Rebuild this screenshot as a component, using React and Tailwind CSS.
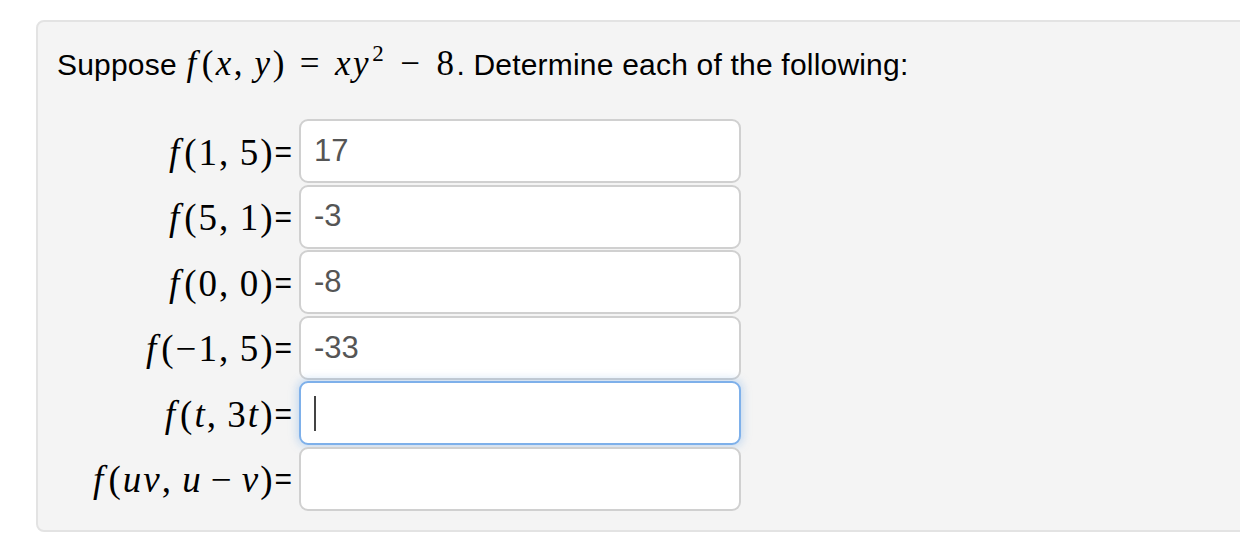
import React from "react";

const serif = { fontFamily: '"Liberation Serif", "Times New Roman", serif' };

function V({ children, className = "" }) {
  return <i className={`italic ${className}`}>{children}</i>;
}

function Label({ children }) {
  return (
    <div className="flex items-center justify-end h-[64px] pr-[7px] text-[30px] text-black">
      <span style={serif} className="text-[37px] leading-none tracking-[2px] pt-[2px]">
        {children}
      </span>
      <span>=</span>
    </div>
  );
}

function Field({ value, focused }) {
  return (
    <div
      className={`h-[64px] w-[442px] rounded-[9px] bg-white flex items-center pl-[13px] text-[31px] text-[#555] ${
        focused
          ? "border-2 border-[#7eb0ea] shadow-[0_0_8px_2px_rgba(110,165,230,0.35)]"
          : "border-2 border-[#d0d0d0]"
      }`}
    >
      {value}
      {focused && <span className="block w-[2px] h-[35px] bg-[#444]" />}
    </div>
  );
}

const rows = [
  { label: <><V className="mr-[3px]">f</V>(1,&#8201;5)</>, value: "17" },
  { label: <><V className="mr-[3px]">f</V>(5,&#8201;1)</>, value: "-3" },
  { label: <><V className="mr-[3px]">f</V>(0,&#8201;0)</>, value: "-8" },
  { label: <><V className="mr-[3px]">f</V>(−1,&#8201;5)</>, value: "-33" },
  { label: <><V className="mr-[3px]">f</V>(<V>t</V>,&#8201;3<V>t</V>)</>, value: "", focused: true },
  {
    label: (
      <>
        <V className="mr-[3px]">f</V>(<V>uv</V>,&#8201;<V>u</V>
        <span className="mx-[8px]">−</span>
        <V>v</V>)
      </>
    ),
    value: "",
  },
];

export default function App() {
  return (
    <div
      className="w-[1240px] h-[542px] overflow-hidden bg-white pl-[36px] pt-[20px]"
      style={{ fontFamily: '"Liberation Sans", Arial, sans-serif' }}
    >
      <div className="w-[1230px] h-[512px] bg-[#f4f4f4] border-2 border-[#e3e3e3] rounded-[8px] pl-[19px] pt-[24px]">
        {/* Question */}
        <p className="text-[30px] leading-[36px] text-black whitespace-nowrap tracking-[0.2px]">
          Suppose{" "}
          <span style={serif} className="text-[35px] leading-none tracking-[2.5px] ml-[1px]">
            <V className="mr-[3px]">f</V>(<V>x</V>,&#8201;<V>y</V>)
            <span className="mx-[13px]">=</span>
            <V>xy</V>
            <sup className="text-[23px] relative -top-[14px] ml-[1px]">2</sup>
            <span className="mx-[14px]">−</span>8
          </span>
          . Determine each of the following:
        </p>

        {/* Answers */}
        <div className="grid grid-cols-[242px_442px] gap-y-[1.6px] mt-[36px]">
          {rows.map((r, i) => (
            <React.Fragment key={i}>
              <Label>{r.label}</Label>
              <Field value={r.value} focused={r.focused} />
            </React.Fragment>
          ))}
        </div>
      </div>
    </div>
  );
}
